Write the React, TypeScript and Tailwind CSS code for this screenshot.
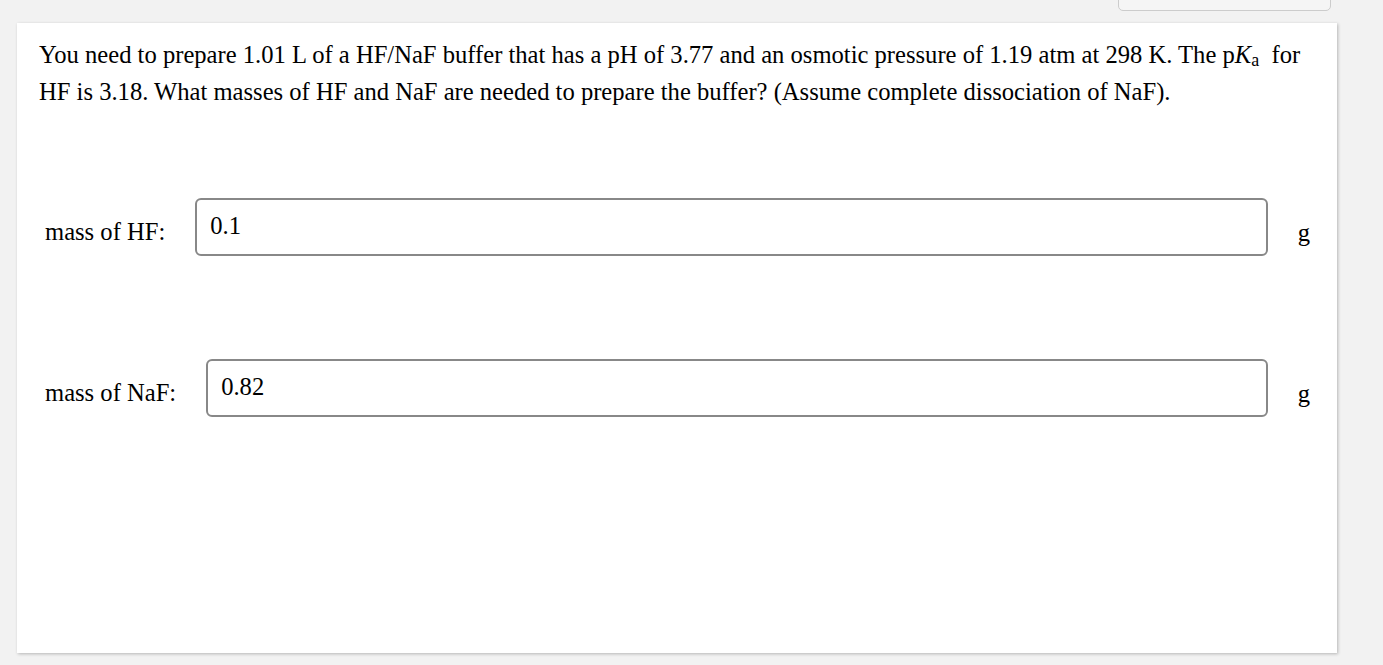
import { useState } from 'react';

const serif = { fontFamily: '"Liberation Serif", "Times New Roman", serif' };

function MassRow({
  label,
  value,
  onChange,
  className,
}: {
  label: string;
  value: string;
  onChange: (v: string) => void;
  className?: string;
}) {
  return (
    <div className={`flex items-center pl-[6px] ${className ?? ''}`}>
      <span className="pt-[10px] pr-[30px] whitespace-nowrap text-[24.6px] text-black">{label}</span>
      <input
        value={value}
        onChange={(e) => onChange(e.target.value)}
        className="h-[58px] flex-1 rounded-[6px] border-2 border-[#888888] bg-white pl-[13px] pb-[3px] text-[24.6px] text-black outline-none"
        style={serif}
      />
      <span className="pt-[12px] pl-[30px] pr-[5px] text-[24.6px] text-black">g</span>
    </div>
  );
}

export default function App() {
  const [hf, setHf] = useState('0.1');
  const [naf, setNaf] = useState('0.82');

  return (
    <div className="relative h-[665px] w-full overflow-hidden bg-[#f2f2f2]" style={serif}>
      {/* top-right tab peeking in */}
      <div className="absolute right-[52px] top-[-10px] h-[21px] w-[213px] rounded-b-[5px] border border-[#cccccc] bg-[#f5f5f5]" />

      <div className="ml-[17px] mt-[23px] h-[630px] w-[1320px] bg-white pl-[22px] pr-[22px] pt-[13px] shadow-[1px_1px_3px_rgba(0,0,0,0.25)]">
        <p className="text-[24.6px] leading-[37px] text-black">
          You need to prepare 1.01 L of a HF/NaF buffer that has a pH of 3.77 and an osmotic pressure of 1.19 atm at
          298 K. The p<i>K</i>
          <sub className="relative top-[3px] align-baseline text-[18px]">a</sub>&nbsp; for HF is 3.18. What masses of HF
          and NaF are needed to prepare the buffer? (Assume complete dissociation of NaF).
        </p>

        <MassRow label="mass of HF:" value={hf} onChange={setHf} className="mt-[88px]" />
        <MassRow label="mass of NaF:" value={naf} onChange={setNaf} className="mt-[103px]" />
      </div>
    </div>
  );
}
